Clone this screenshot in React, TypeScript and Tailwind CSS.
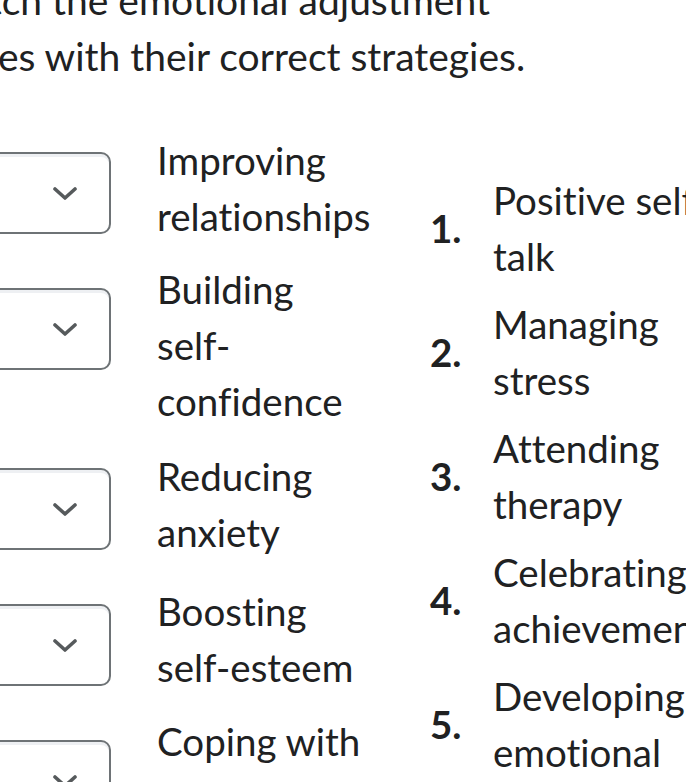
const ROWS = [
  { lines: ['Improving', 'relationships'], gap: 'mt-0', box: 'mt-[20px]' },
  { lines: ['Building', 'self-', 'confidence'], gap: 'mt-[17px]', box: 'mt-[27px]' },
  { lines: ['Reducing', 'anxiety'], gap: 'mt-[19px]', box: 'mt-[20px]' },
  { lines: ['Boosting', 'self-esteem'], gap: 'mt-[23px]', box: 'mt-[21px]' },
  { lines: ['Coping with', 'stress'], gap: 'mt-[18px]', box: 'mt-[27px]' },
]

const CHOICES = [
  ['Positive self-', 'talk'],
  ['Managing', 'stress'],
  ['Attending', 'therapy'],
  ['Celebrating', 'achievements'],
  ['Developing', 'emotional'],
]

function Chevron() {
  return (
    <svg width="24" height="13" viewBox="0 0 24 13" fill="none">
      <polyline
        points="2,2 12,11 22,2"
        stroke="#565a5c"
        strokeWidth="3.6"
        strokeLinecap="round"
        strokeLinejoin="round"
      />
    </svg>
  )
}

export default function App() {
  return (
    <div className="w-[686px] h-[782px] overflow-hidden bg-white font-['Lato',sans-serif] text-[38.5px] leading-[56px] text-[#202122] [font-variant-ligatures:none]">
      <div className="ml-[-67px] mt-[-28px] whitespace-nowrap text-[39px]">
        <p>Match the emotional adjustment</p>
        <p>issues with their correct strategies.</p>
      </div>

      <div className="flex mt-[48px] ml-[-100px]">
        {/* selects + labels */}
        <div className="flex flex-col">
          {ROWS.map((row) => (
            <div key={row.lines.join(' ')} className={`flex items-start ${row.gap}`}>
              <div
                className={`${row.box} w-[211px] h-[82px] shrink-0 rounded-[10px] border-2 border-[#6e7376] bg-white shadow-[inset_0_3px_0_0_rgba(205,213,220,0.35)] flex items-center justify-end pr-[32px]`}
              >
                <Chevron />
              </div>
              <div className="ml-[46px] w-[227px] whitespace-nowrap">
                {row.lines.map((l) => (
                  <div key={l}>{l}</div>
                ))}
              </div>
            </div>
          ))}
        </div>

        {/* numbered choices */}
        <div className="flex flex-col gap-[12px] mt-[40px] ml-[46px]">
          {CHOICES.map((c, i) => (
            <div key={c.join(' ')} className="flex items-center">
              <span className="w-[63px] shrink-0 font-bold">{i + 1}.</span>
              <span className="whitespace-nowrap">
                {c.map((l) => (
                  <div key={l}>{l}</div>
                ))}
              </span>
            </div>
          ))}
        </div>
      </div>
    </div>
  )
}
